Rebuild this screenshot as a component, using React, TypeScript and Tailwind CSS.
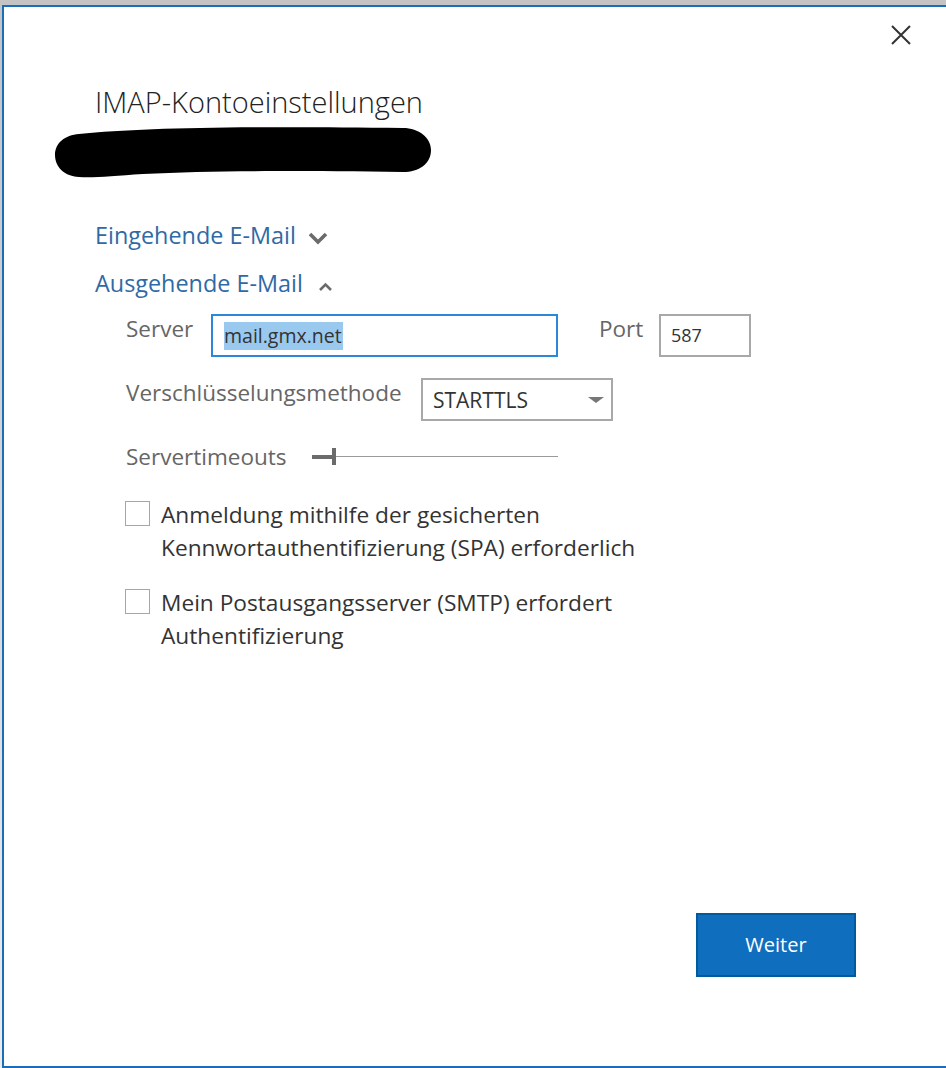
import React from "react";

const font = { fontFamily: '"Open Sans", "Noto Sans", "Liberation Sans", sans-serif' };

function Chevron({ up }: { up?: boolean }) {
  return up ? (
    <svg width="15" height="10" viewBox="0 0 15 10" className="ml-[15px] mt-[14px]">
      <path d="M2 8 L7.5 2.5 L13 8" fill="none" stroke="#6b6b6b" strokeWidth="2.6" />
    </svg>
  ) : (
    <svg width="20" height="14" viewBox="0 0 20 14" className="ml-[12px] mt-[11px]">
      <path d="M2 3 L10 11 L18 3" fill="none" stroke="#6b6b6b" strokeWidth="3.6" />
    </svg>
  );
}

function Checkbox({ children }: { children: React.ReactNode }) {
  return (
    <div className="flex items-start">
      <div className="w-[25px] h-[25px] shrink-0 border border-[#a6a6a6] bg-white mt-[3px]" />
      <p className="ml-[11px] text-[22.7px] leading-[33px] text-[#333]">{children}</p>
    </div>
  );
}

export default function App() {
  return (
    <div className="w-[946px] h-[1068px] overflow-hidden bg-gradient-to-b from-[#c4c4c4] to-[#ececec] pt-[5px] pl-[2px]" style={font}>
      <div className="w-[1000px] h-[1063px] bg-white border-t-2 border-l-2 border-b-2 border-[#1a6db8]">
        <div className="w-[942px] flex justify-end pt-[18px] pr-[35px]">
          <svg width="20" height="20" viewBox="0 0 20 20">
            <path d="M1 1 L19 19 M19 1 L1 19" stroke="#333" strokeWidth="2" />
          </svg>
        </div>

        <h1 className="ml-[91px] mt-[38px] text-[29px] leading-[38px] font-light text-[#222]">
          IMAP-Kontoeinstellungen
        </h1>
        <svg width="380" height="56" viewBox="0 0 380 56" className="ml-[49px] mt-[3px] block">
          <path
            d="M26 10 C90 4 180 2 350 4 C366 4 378 14 378 26 C378 40 366 48 350 48 C250 47 160 46 90 50 C60 52 40 54 26 53 C10 52 2 42 2 31 C2 19 12 11 26 10 Z"
            fill="#000"
          />
        </svg>

        <div className="ml-[91px] mt-[40px] flex items-start text-[23.4px] leading-[30px] text-[#2f6aa6]">
          <span>Eingehende E-Mail</span>
          <Chevron />
        </div>
        <div className="ml-[91px] mt-[18px] flex items-start text-[23.4px] leading-[30px] text-[#2f6aa6]">
          <span>Ausgehende E-Mail</span>
          <Chevron up />
        </div>

        <div className="ml-[122px] mt-[16px] text-[#666]">
          <div className="flex items-start">
            <span className="w-[85px] text-[22.5px] leading-[30px]">Server</span>
            <div className="w-[347px] h-[43px] border-2 border-[#2b88d8] flex items-center pl-[11px]">
              <span className="bg-[#99c9ef] text-[#333] text-[19.5px] leading-[28px] pr-[1px]">mail.gmx.net</span>
            </div>
            <span className="ml-[41px] w-[60px] text-[22.5px] leading-[30px]">Port</span>
            <div className="w-[92px] h-[43px] border-2 border-[#a8a8a8] flex items-center pl-[10px] text-[18px] text-[#333]">
              587
            </div>
          </div>

          <div className="flex items-start mt-[21px]">
            <span className="w-[295px] text-[22.5px] leading-[30px]">Verschlüsselungsmethode</span>
            <div className="w-[192px] h-[43px] border-2 border-[#a8a8a8] flex items-center justify-between pl-[10px] pr-[7px]">
              <span className="text-[21px] text-[#333] pt-[2px]">STARTTLS</span>
              <svg width="16" height="8" viewBox="0 0 16 8">
                <path d="M0 1 L16 1 L8 7 Z" fill="#777" />
              </svg>
            </div>
          </div>

          <div className="flex items-start mt-[21px]">
            <span className="w-[186px] text-[22.5px] leading-[30px]">Servertimeouts</span>
            <div className="flex items-center mt-[6px]">
              <div className="w-[20px] h-[4px] bg-[#6b6b6b]" />
              <div className="w-[4px] h-[17px] bg-[#6b6b6b]" />
              <div className="w-[222px] h-[1px] bg-[#9a9a9a]" />
            </div>
          </div>

          <div className="-ml-px mt-[26px] flex flex-col gap-[22px]">
            <Checkbox>
              Anmeldung mithilfe der gesicherten
              <br />
              Kennwortauthentifizierung (SPA) erforderlich
            </Checkbox>
            <Checkbox>
              Mein Postausgangsserver (SMTP) erfordert
              <br />
              Authentifizierung
            </Checkbox>
          </div>
        </div>

        <div className="ml-[692px] mt-[261px]">
          <button className="w-[160px] h-[64px] bg-[#106ebe] border-2 border-[#005a9e] text-white text-[20px]">
            Weiter
          </button>
        </div>
      </div>
    </div>
  );
}
